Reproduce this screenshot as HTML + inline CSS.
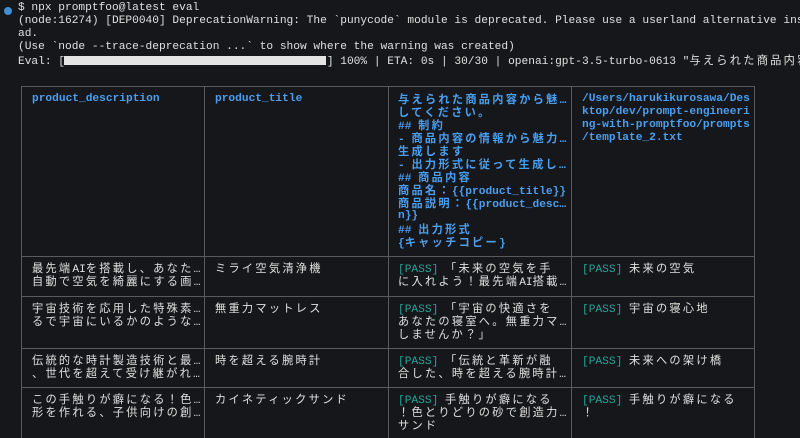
<!DOCTYPE html>
<html><head><meta charset="utf-8"><style>
body{margin:0;background:#16171b;width:800px;height:438px;overflow:hidden;position:relative;font-family:"Liberation Mono","Noto Sans CJK JP",monospace;font-size:11.2px;color:#e0e0e0}
.l{position:absolute}
.l>div{white-space:pre;height:13px;line-height:13px;overflow:visible}
.j{font-family:"Noto Sans CJK JP",sans-serif;letter-spacing:2.28px;line-height:13px}
.b{color:#4a9ff0;font-weight:bold}
.g{color:#22a59a}
.v{position:absolute;width:1px;background:#5a5a5a;top:86px;height:352px}
.h{position:absolute;height:1px;background:#5a5a5a;left:21px;width:734px}
</style></head><body>
<div style="position:absolute;left:4px;top:7px;width:8px;height:8px;border-radius:50%;background:#3d8fd6"></div>
<div class="l" style="left:18px;top:2px">
<div>$ npx promptfoo@latest eval</div>
<div>(node:16274) [DEP0040] DeprecationWarning: The `punycode` module is deprecated. Please use a userland alternative inste</div>
<div>ad.</div>
<div>(Use `node --trace-deprecation ...` to show where the warning was created)</div>
<div>Eval: [                                       ] 100% | ETA: 0s | 30/30 | openai:gpt-3.5-turbo-0613 "<span class="j">与えられた商品内容</span></div>
</div>
<div style="position:absolute;left:64px;top:56px;width:262px;height:9px;background:#e4e4e4"></div>

<div class="v" style="left:21px"></div><div class="v" style="left:204px"></div><div class="v" style="left:388px"></div><div class="v" style="left:571px"></div><div class="v" style="left:754px"></div>
<div class="h" style="top:86px"></div><div class="h" style="top:256px"></div><div class="h" style="top:296px"></div><div class="h" style="top:348px"></div><div class="h" style="top:387px"></div>

<div class="l b" style="left:32px;top:93px"><div>product_description</div></div>
<div class="l b" style="left:215px;top:93px"><div>product_title</div></div>
<div class="l b" style="left:398px;top:93px">
<div><span class="j">与えられた商品内容から魅</span>…</div>
<div><span class="j">してください。</span></div>
<div>## <span class="j">制約</span></div>
<div>- <span class="j">商品内容の情報から魅力</span>…</div>
<div><span class="j">生成します</span></div>
<div>- <span class="j">出力形式に従って生成し</span>…</div>
<div>## <span class="j">商品内容</span></div>
<div><span class="j">商品名：</span>{{product_title}}</div>
<div><span class="j">商品説明：</span>{{product_desc…</div>
<div>n}}</div>
<div>## <span class="j">出力形式</span></div>
<div>{<span class="j">キャッチコピー</span>}</div>
</div>
<div class="l b" style="left:582px;top:93px">
<div>/Users/harukikurosawa/Des</div>
<div>ktop/dev/prompt-engineeri</div>
<div>ng-with-promptfoo/prompts</div>
<div>/template_2.txt</div>
</div>

<div class="l" style="left:32px;top:262px">
<div><span class="j">最先端</span>AI<span class="j">を搭載し、あなた</span>…</div>
<div><span class="j">自動で空気を綺麗にする画</span>…</div></div>
<div class="l" style="left:215px;top:262px"><div><span class="j">ミライ空気清浄機</span></div></div>
<div class="l" style="left:398px;top:262px">
<div><span class="g">[PASS]</span> <span class="j">「未来の空気を手</span></div>
<div><span class="j">に入れよう！最先端</span>AI<span class="j">搭載</span>…</div></div>
<div class="l" style="left:582px;top:262px"><div><span class="g">[PASS]</span> <span class="j">未来の空気</span></div></div>

<div class="l" style="left:32px;top:302px">
<div><span class="j">宇宙技術を応用した特殊素</span>…</div>
<div><span class="j">るで宇宙にいるかのような</span>…</div></div>
<div class="l" style="left:215px;top:302px"><div><span class="j">無重力マットレス</span></div></div>
<div class="l" style="left:398px;top:302px">
<div><span class="g">[PASS]</span> <span class="j">「宇宙の快適さを</span></div>
<div><span class="j">あなたの寝室へ。無重力マ</span>…</div>
<div><span class="j">しませんか？」</span></div></div>
<div class="l" style="left:582px;top:302px"><div><span class="g">[PASS]</span> <span class="j">宇宙の寝心地</span></div></div>

<div class="l" style="left:32px;top:354px">
<div><span class="j">伝統的な時計製造技術と最</span>…</div>
<div><span class="j">、世代を超えて受け継がれ</span>…</div></div>
<div class="l" style="left:215px;top:354px"><div><span class="j">時を超える腕時計</span></div></div>
<div class="l" style="left:398px;top:354px">
<div><span class="g">[PASS]</span> <span class="j">「伝統と革新が融</span></div>
<div><span class="j">合した、時を超える腕時計</span>…</div></div>
<div class="l" style="left:582px;top:354px"><div><span class="g">[PASS]</span> <span class="j">未来への架け橋</span></div></div>

<div class="l" style="left:32px;top:393px">
<div><span class="j">この手触りが癖になる！色</span>…</div>
<div><span class="j">形を作れる、子供向けの創</span>…</div></div>
<div class="l" style="left:215px;top:393px"><div><span class="j">カイネティックサンド</span></div></div>
<div class="l" style="left:398px;top:393px">
<div><span class="g">[PASS]</span> <span class="j">手触りが癖になる</span></div>
<div><span class="j">！色とりどりの砂で創造力</span>…</div>
<div><span class="j">サンド</span></div></div>
<div class="l" style="left:582px;top:393px">
<div><span class="g">[PASS]</span> <span class="j">手触りが癖になる</span></div>
<div><span class="j">！</span></div></div>
</body></html>
